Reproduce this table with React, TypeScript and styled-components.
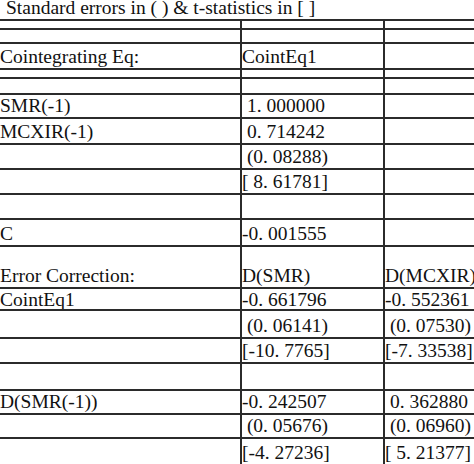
import styled, { createGlobalStyle } from "styled-components";

const GlobalStyle = createGlobalStyle`
  html, body {
    margin: 0;
    padding: 0;
    background: #ffffff;
  }
  body {
    width: 474px;
    height: 464px;
    overflow: hidden;
    font-family: "Liberation Serif", "Times New Roman", serif;
    color: #111111;
  }
`;

const Page = styled.div`
  display: flex;
  flex-direction: column;
  width: 474px;
  overflow: hidden;
`;

const Caption = styled.div`
  height: 19px;
  display: flex;
  align-items: flex-end;
  padding-left: 6px;
  box-sizing: border-box;
  font-size: 19.5px;
  line-height: 22px;
  white-space: pre;
`;

const Table = styled.div`
  display: flex;
  flex-direction: column;
`;

const Row = styled.div<{ $h: number }>`
  display: grid;
  grid-template-columns: 240px 143px 1fr;
  height: ${(p) => p.$h}px;
  border-top: 2px solid #2b2b2b;
  box-sizing: border-box;
`;

const Cell = styled.div<{ $divider?: boolean }>`
  display: flex;
  align-items: flex-end;
  border-left: ${(p) => (p.$divider ? "2px solid #2b2b2b" : "none")};
  font-size: 19.5px;
  line-height: 22px;
  white-space: pre;
`;

type RowData = { h: number; cells: [string, string, string] };

const rows: RowData[] = [
  { h: 9, cells: ["", "", ""] },
  { h: 14, cells: ["", "", ""] },
  { h: 26, cells: ["Cointegrating Eq:", "CointEq1", ""] },
  { h: 9, cells: ["", "", ""] },
  { h: 16, cells: ["", "", ""] },
  { h: 24, cells: ["SMR(-1)", " 1. 000000", ""] },
  { h: 26, cells: ["MCXIR(-1)", " 0. 714242", ""] },
  { h: 25, cells: ["", " (0. 08288)", ""] },
  { h: 25, cells: ["", "[ 8. 61781]", ""] },
  { h: 25, cells: ["", "", ""] },
  { h: 27, cells: ["C", "-0. 001555", ""] },
  { h: 42, cells: ["Error Correction:", "D(SMR)", "D(MCXIR)"] },
  { h: 22, cells: ["CointEq1", "-0. 661796", "-0. 552361"] },
  { h: 28, cells: ["", " (0. 06141)", " (0. 07530)"] },
  { h: 25, cells: ["", "[-10. 7765]", "[-7. 33538]"] },
  { h: 27, cells: ["", "", ""] },
  { h: 24, cells: ["D(SMR(-1))", "-0. 242507", " 0. 362880"] },
  { h: 24, cells: ["", " (0. 05676)", " (0. 06960)"] },
  { h: 27, cells: ["", "[-4. 27236]", "[ 5. 21377]"] },
];

export default function App() {
  return (
    <>
      <GlobalStyle />
      <Page>
        <Caption>Standard errors in ( ) &amp; t-statistics in [ ]</Caption>
        <Table>
          {rows.map((r, i) => (
            <Row key={i} $h={r.h}>
              <Cell>{r.cells[0]}</Cell>
              <Cell $divider>{r.cells[1]}</Cell>
              <Cell $divider>{r.cells[2]}</Cell>
            </Row>
          ))}
        </Table>
      </Page>
    </>
  );
}
